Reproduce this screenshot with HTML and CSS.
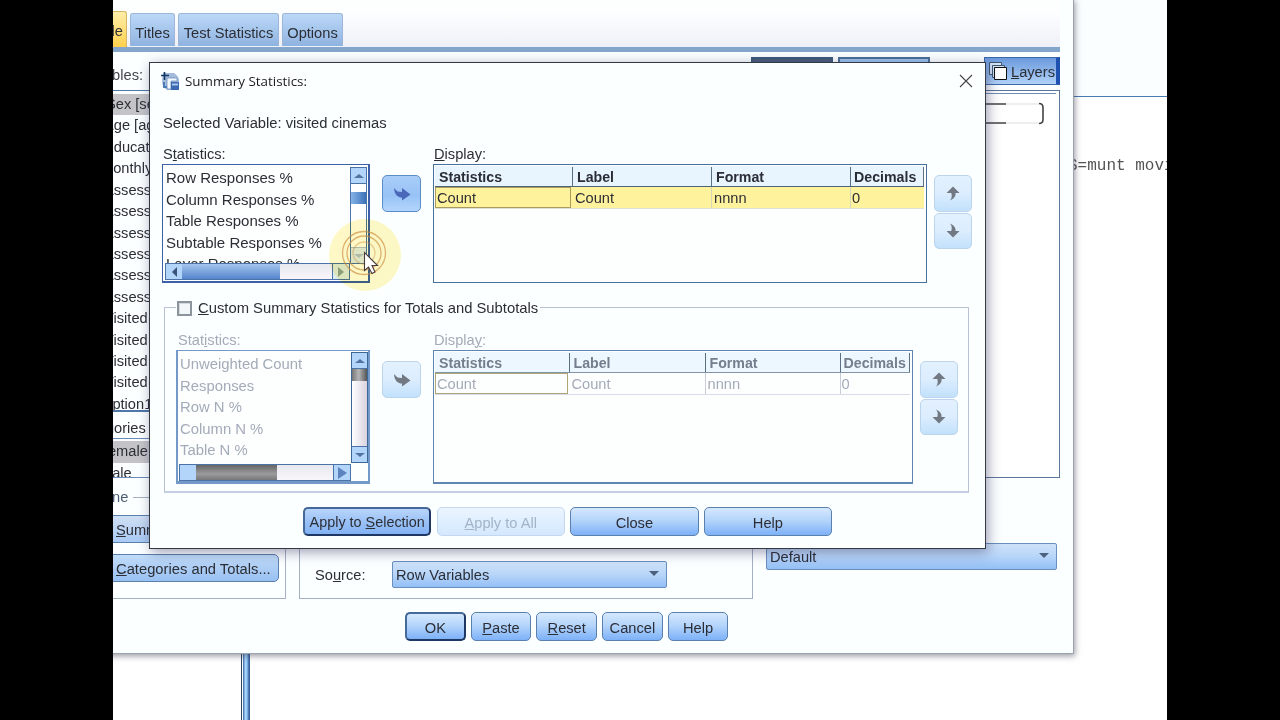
FILE: index.html
```html
<!DOCTYPE html>
<html lang="en">
<head>
<meta charset="utf-8">
<title>Summary Statistics</title>
<link rel="stylesheet" href="styles.css">
</head>
<body>
<svg class="defs" width="0" height="0">
  <symbol id="arrow" viewBox="0 0 18 14"><path d="M1 1 L4.500 4.500 L9 5 V1 L17.5 7.5 L9 13.500 V10.500 C5 10.500 1.5 8 1 1Z"/></symbol>
  <symbol id="up" viewBox="0 0 14 15"><path d="M7 0.5 L13.5 7 H9.5 C10 10 8 13 4 14.5 C6 12 6 10 5.3 7 H0.5Z"/></symbol>
  <symbol id="down" viewBox="0 0 14 15"><path d="M7 14.5 L13.5 8 H9.5 C10 5 8 2 4 0.5 C6 3 6 5 5.3 8 H0.5Z"/></symbol>
</svg>
<div class="screen">
  <div class="editor">
    <div class="editor-line">S=munt movie</div>
  </div>
  <div class="splitter"></div>

  <div class="window tables">
    <div class="tabs">
      <div class="tab active">Table</div>
      <div class="tab t1">Titles</div>
      <div class="tab t2">Test Statistics</div>
      <div class="tab t3">Options</div>
    </div>
    <div class="toolbar">
      <span class="vars-label">Variables:</span>
      <div class="tool dark"></div>
      <div class="tool light"></div>
      <div class="tool layers">
        <svg width="20" height="20" viewBox="0 0 20 20"><g fill="#d5e6f6" stroke="#3f566e"><path d="M1.5 1.5h12v12h-12z"/><path d="M4.500 4.500h12v12h-12z"/></g><path d="M6.500 6.500h12v12h-12z" fill="#fff" stroke="#111"/></svg>
        <span><u>L</u>ayers</span>
      </div>
    </div>
    <div class="panes">
      <div class="side">
        <div class="vars">
          <div class="sel">Sex [sex]</div><div>Age [age]</div><div>Education</div><div class="m">Monthly</div>
          <div>Assess</div><div>Assess</div><div>Assess</div><div>Assess</div><div>Assess</div><div>Assess</div>
          <div>Visited</div><div>Visited</div><div>Visited</div><div>Visited</div><div class="m">Option1</div>
        </div>
        <div class="cat-label">Categories</div>
        <div class="cats"><div class="sel">Female</div><div>Male</div></div>
      </div>
      <div class="canvas">
        <div class="canvas-top"></div>
        <svg class="slot" width="60" height="24" viewBox="0 0 60 24"><path d="M0 2H21M0 21H21" stroke="#444" stroke-width="1.6"/><path d="M21 2H54M21 21H54" stroke="#ddd"/><path d="M54 1.500q4 0 4 4v12q0 4-4 4" fill="none" stroke="#444" stroke-width="1.6"/></svg>
      </div>
    </div>
    <div class="lower">
      <div class="define">
        <div class="define-title"><span>Define</span></div>
        <div class="btn wide"><span><u>S</u>ummary</span></div>
        <div class="btn wide cat"><span><u>C</u>ategories and Totals...</span></div>
      </div>
      <div class="source">
        <span class="source-label">So<u>u</u>rce:</span>
        <div class="combo"><span>Row Variables</span><i class="caret"></i></div>
      </div>
      <div class="combo position"><span>Default</span><i class="caret"></i></div>
    </div>
    <div class="actions">
      <div class="btn primary">OK</div>
      <div class="btn"><span><u>P</u>aste</span></div>
      <div class="btn"><span><u>R</u>eset</span></div>
      <div class="btn">Cancel</div>
      <div class="btn">Help</div>
    </div>
  </div>

  <div class="window dialog">
    <div class="titlebar">
      <svg width="20" height="20" viewBox="0 0 20 20"><path d="M3 2h11q5 3 5 8v9H7q-5-3-5-9z" fill="#a3bcdc"/><path d="M7 7h10v3h-6v8H7z" fill="#f2f7fc" stroke="#6f90bb" stroke-width=".8"/><path d="M11 11h8v8h-8z" fill="#3b68ae"/><path d="M12 12.500h6v2h-6z" fill="#a7c6ee"/><path d="M4.500 1v8M1 4.500h8" stroke="#123766" stroke-width="1.600"/><path d="M4 11v5h3" stroke="#4d7cb8" fill="none" stroke-width="2"/></svg>
      <span>Summary Statistics:</span>
      <svg class="close" width="14" height="14" viewBox="0 0 14 14"><path d="M1 1L13 13M13 1L1 13" stroke="#444" stroke-width="1.1"/></svg>
    </div>
    <div class="selected">Selected Variable: visited cinemas</div>

    <div class="picker first">
      <div class="field list-field">
        <label>S<u>t</u>atistics:</label>
        <div class="list">
          <div class="rows"><div>Row Responses %</div><div>Column Responses %</div><div>Table Responses %</div><div>Subtable Responses %</div><div>Layer Responses %</div></div>
          <div class="vbar"><b class="sb"><i class="tri n"></i></b><i class="thumb"></i><b class="sb end"><i class="tri s"></i></b></div>
          <div class="hbar"><b class="sb"><i class="tri w"></i></b><i class="thumb"></i><i class="track"></i><b class="sb"><i class="tri e"></i></b></div>
        </div>
      </div>
      <div class="icon-btn move on"><svg width="18" height="14"><use href="#arrow"/></svg></div>
      <div class="field table-field">
        <label><u>D</u>isplay:</label>
        <div class="grid">
          <div class="tr head"><div>Statistics</div><div>Label</div><div>Format</div><div>Decimals</div></div>
          <div class="tr row"><div class="focus">Count</div><div>Count</div><div>nnnn</div><div>0</div></div>
        </div>
      </div>
      <div class="order">
        <div class="icon-btn"><svg width="14" height="15"><use href="#up"/></svg></div>
        <div class="icon-btn"><svg width="14" height="15"><use href="#down"/></svg></div>
      </div>
    </div>

    <div class="group">
      <div class="legend"><i class="check"></i><span><u>C</u>ustom Summary Statistics for Totals and Subtotals</span></div>
      <div class="picker second">
        <div class="field list-field">
          <label>Stat<u>i</u>stics:</label>
          <div class="list">
            <div class="rows"><div>Unweighted Count</div><div>Responses</div><div>Row N %</div><div>Column N %</div><div>Table N %</div></div>
            <div class="vbar"><b class="sb"><i class="tri n"></i></b><i class="thumb"></i><b class="sb end"><i class="tri s"></i></b></div>
            <div class="hbar"><b class="sb"></b><i class="thumb"></i><i class="track"></i><b class="sb"><i class="tri e"></i></b></div>
          </div>
        </div>
        <div class="icon-btn move"><svg width="18" height="14"><use href="#arrow"/></svg></div>
        <div class="field table-field">
          <label>Displa<u>y</u>:</label>
          <div class="grid">
            <div class="tr head"><div>Statistics</div><div>Label</div><div>Format</div><div>Decimals</div></div>
            <div class="tr row"><div class="focus">Count</div><div>Count</div><div>nnnn</div><div>0</div></div>
          </div>
        </div>
        <div class="order">
          <div class="icon-btn"><svg width="14" height="15"><use href="#up"/></svg></div>
          <div class="icon-btn"><svg width="14" height="15"><use href="#down"/></svg></div>
        </div>
      </div>
    </div>

    <div class="footer">
      <div class="btn primary"><span>Apply to <u>S</u>election</span></div>
      <div class="btn off"><span><u>A</u>pply to All</span></div>
      <div class="btn">Close</div>
      <div class="btn">Help</div>
    </div>
  </div>

  <div class="glow"></div>
  <svg class="pointer" width="50" height="50" viewBox="0 0 50 50">
    <g fill="none" stroke="#c98a3c" stroke-opacity=".65" stroke-width="1.3"><circle cx="25" cy="25" r="21.500"/><circle cx="25" cy="25" r="17"/><circle cx="25" cy="25" r="11" stroke-opacity=".4"/></g>
    <path d="M25.500 24.500V42.500L29.500 39L33 45.500L36 44L33 37.500H38.500Z" fill="#fff" stroke="#4a3b3b" stroke-width="1.1"/>
  </svg>
</div>
</body>
</html>
```
FILE: styles.css
```css
* { box-sizing: border-box; }
body {
  margin: 0; width: 1280px; height: 720px; overflow: hidden;
  display: flex; justify-content: center; background: #000;
  font: 14.650px/20px "Liberation Sans", Arial, sans-serif; color: #2c2e36;
}
u { text-underline-offset: 1px; text-decoration-thickness: 1px; }
.defs { position: absolute; }
.screen { position: relative; width: 1054px; height: 720px; overflow: hidden; background: #fff; white-space: nowrap; }

.editor { margin-left: 955px; padding-top: 96px; height: 400px; background: linear-gradient(#fbfeff 96px, #fff 96px); }
.editor-line { border-top: 1px solid #4a78b0; padding-top: 59px; font: 16px/20px "Liberation Mono", monospace; color: #555; height: 100px; }
.splitter {
  position: absolute; left: 128px; top: 640px; width: 9px; height: 80px;
  background: linear-gradient(90deg, #2c4468 0 1px, #fff 1px 2px, #4f7fb8 2px 3px, #b3dcfc 4px, #8fc4f5 6px, #3a64a0 8px);
}

.window { position: absolute; background: #fcffff; }
.tables {
  left: -14px; top: -1px; width: 975px; height: 655px;
  border: 1px solid #9aa2b0; box-shadow: 1px 2px 6px rgba(50,50,70,.5);
}
.tabs {
  display: flex; align-items: flex-end; gap: 3px; width: 960px; height: 52px;
  border-bottom: 5px solid #84a5cc; background: linear-gradient(#fdffff 10px, #f0f0f8 46px);
}
.tab {
  height: 33px; margin-bottom: 1px; padding-top: 9px; text-align: center;
  background: linear-gradient(#bcd8f8, #8fb3e0); border: 1px solid #9bb6d8; border-bottom: 0; border-radius: 3px 3px 0 0;
}
.active { width: 27px; height: 36px; margin-bottom: 0; background: linear-gradient(#ffedaa, #ffd04c); border-color: #d5b661; display: flex; justify-content: flex-end; padding-right: 3px; }
.t1 { width: 45px; }
.t2 { width: 101px; }
.t3 { width: 61px; }

.toolbar { display: flex; width: 960px; height: 38px; padding-top: 5px; align-items: flex-start; }
.vars-label { width: 651px; padding-top: 8px; text-indent: -21px; color: #43464c; }
.tool { height: 28px; border: 2px solid #3d5a7c; border-bottom-width: 1px; }
.dark { width: 82px; background: #4b5e7a; }
.light { width: 92px; margin-left: 5px; background: #9cc3ee; border-color: #4a6f96; }
.layers { width: 76px; margin-left: auto; display: flex; gap: 3px; padding: 3px 0 0 4px; background: linear-gradient(#6b99dc, #b0d2f8); border: solid #3d68a8; border-width: 1px 4px 1px 1px; border-right-color: #1f52b0; }
.layers span { padding-top: 1px; }
.layers svg { flex: none; margin: 0 0 0 -1px; }

.panes { display: flex; justify-content: space-between; width: 960px; height: 388px; }
.side { width: 50px; border-top: 1px solid #4f77a8; border-bottom: 1px solid #6a8db8; overflow: hidden; }
.vars { height: 321px; overflow: hidden; line-height: 21.430px; border-bottom: 2px solid #4f77a8; padding-top: 3px; }
.vars div { padding-left: 4px; height: 21.430px; }
.vars .sel { padding-left: 6px; }
.vars .m { padding-left: 1px; }
.sel { background: #c4c4c8; }
.cat-label { height: 27px; padding-top: 6px; text-indent: -25px; border-bottom: 1px solid #6a8db8; }
.cats { padding-top: 2px; line-height: 21.500px; }
.cats .sel { text-indent: -1px; }
.canvas { width: 200px; border: 1px solid #5c7699; border-left: 0; background: #fff; }
.canvas-top { height: 3px; margin-right: 3px; border-bottom: 1px solid #6f8fb5; }
.slot { display: block; margin: 8px 0 0 125px; }

.lower { display: flex; width: 960px; height: 121px; }
.define { width: 186px; border: solid #a5b0c0; border-width: 0 1px 1px 0; padding-top: 9px; }
.define-title { height: 20px; margin-bottom: 8px; display: flex; align-items: center; color: #4c5c74; }
.define-title span { margin-left: -14px; }
.define-title::after { content: ""; flex: 1; margin-left: 5px; border-top: 1px solid #a5b0c0; }
.btn {
  display: flex; align-items: center; justify-content: center; height: 29px; padding-top: 1px;
  background: linear-gradient(#d5e8fd, #b5d5fb 45%, #7db1f8); border: 1px solid #5a80ac; border-radius: 5px;
}
.wide { width: 179px; height: 28px; justify-content: flex-start; padding: 1px 0 0 15px; background: linear-gradient(#cfdff3, #a8caf4); }
.cat { margin-top: 11px; font-size: 14.750px; padding-top: 2px; background: linear-gradient(#c2dcf8, #98c0f2); }
.source { display: flex; width: 454px; margin-left: 13px; border: 1px solid #a5b0c0; border-top: 0; padding: 83px 0 0 15px; }
.source-label { width: 77px; padding-top: 4px; }
.combo {
  display: flex; align-items: center; justify-content: space-between; width: 275px; height: 27px; padding: 0 7px 0 3px;
  background: linear-gradient(#cfe2f8, #b7d5f9 50%, #93bff6); border: 1px solid #6a8fbd; border-radius: 2px;
}
.position { width: 291px; margin: 65px 0 0 13px; }
.caret { border: 5px solid transparent; border-top: 5px solid #4c617e; border-bottom: 0; margin-top: -3px; }
.actions { display: flex; gap: 5px; padding: 13px 0 0 305px; }
.actions .btn { width: 60.700px; padding-top: 2px; }
.primary { border: 2px solid #1f3763; border-top-color: #456a9a; border-left-color: #456a9a; }

.dialog {
  left: 36px; top: 62px; width: 837px; height: 487px; border: 1px solid #333a44;
  box-shadow: 2px 3px 12px rgba(40,40,90,.45);
}
.titlebar { display: flex; align-items: center; height: 36px; padding-left: 10px; gap: 5px; font: 13.400px/20px "Open Sans", "Noto Sans", sans-serif; color: #1c1c1f; }
.titlebar svg { flex: none; }
.close { margin: 0 12px 0 auto; }
.selected { margin: 14px 0 0 13px; font-size: 14.750px; }

.picker { display: flex; align-items: flex-start; }
.first { margin: 11px 0 0 12px; }
.field label { display: block; height: 20px; }
.table-field label { padding-left: 1px; }
.list, .grid { border: 1px solid #4d78a8; background: #fdffff; }
.first .list-field label { padding-left: 1px; }
.first .list { width: 208px; height: 119px; border-width: 1px 2px 2px 1px; border-color: #3c60aa; }
.second .list { width: 194px; height: 134px; border: 2px solid #7299c8; border-width: 1px 2px 3px 2px; }
.list { position: relative; overflow: hidden; font-size: 15px; padding: 2px 0 0 2px; line-height: 21.500px; }
.rows { width: 186px; height: 98px; overflow: hidden; }
.second .rows { width: 172px; height: 110px; padding-top: 1px; }
.first .rows div { padding-left: 1px; }
.vbar { position: absolute; right: 1px; top: 2px; width: 17px; height: 97px; display: flex; flex-direction: column; border: 1px solid #4c73a8; background: #fff; }
.hbar { position: absolute; left: 2px; bottom: 1px; width: 185px; height: 17px; display: flex; border: 1px solid #4c73a8; background: #fff; }
.sb { display: flex; flex: none; align-items: center; justify-content: center; width: 16px; height: 16px; background: #b3d5fa; }
.vbar .sb { width: 15px; border-bottom: 1px solid #4c73a8; }
.hbar .sb { height: 15px; }
.vbar .end { margin-top: auto; border-bottom: 0; border-top: 1px solid #4c73a8; }
.tri { border: 4px solid transparent; }
.n { border-width: 0 5px 4px; border-bottom-color: #5274a0; }
.s { border-width: 4px 5px 0; border-top-color: #5274a0; }
.w { border-width: 5px 5px 5px 0; border-right-color: #3a5577; }
.e { border-width: 6px 0 6px 9px; border-left-color: #5c83bd; }
.first .e { border-width: 5px 0 5px 6px; border-left-color: #8ba39a; }
.first .hbar .sb:last-child { background: #dcebf2; }
.first .vbar .end { opacity: .45; }
.first .vbar .thumb { height: 12px; margin-top: 8px; background: linear-gradient(90deg, #86b2e8, #3e72b8); }
.first .hbar .thumb { width: 98px; background: linear-gradient(#a4c6ee, #5585cc); }
.track { flex: 1; background: linear-gradient(#e8e8f0, #f8f6fa); border-right: 1px solid #4c73a8; }
.second .vbar { height: 111px; top: 1px; right: 0; background: linear-gradient(90deg, #fff, #d9d3df); border-color: #3f6796; }
.second .vbar .thumb { height: 12px; background: linear-gradient(90deg, #777, #b5b5b8 45%, #555); }
.second .hbar { left: 1px; bottom: 0; width: 172px; }
.second .hbar .thumb { width: 81px; background: linear-gradient(#666, #9b9b9e 60%, #77777a); }

.icon-btn {
  display: flex; align-items: center; justify-content: center; width: 39px; height: 36px;
  border: 1px solid #bcd4ec; border-radius: 5px; background: linear-gradient(#e3f1fe, #dcedfe 50%, #c2e1fc); fill: #727983;
}
.on { background: linear-gradient(#a9cdf8, #98c2f6 55%, #b2d5fc); border: 1.500px solid #5a8cc8; fill: #4a68ba; }
.move { margin: 31px 12px 0; height: 37px; }
.order { display: flex; flex-direction: column; gap: 1px; margin: 31px 0 0 7px; }
.order .icon-btn { width: 38px; height: 36.500px; }

.grid { width: 494px; height: 119px; padding: 1px; }
.first .grid { border-color: #47719c; }
.tr { display: grid; grid-template-columns: 138px 139px 139px 1fr; margin-right: 1px; }
.head { height: 21px; padding-top: 1px; background: #e8f5ff; border-bottom: 1px solid #4d6478; font-weight: bold; font-size: 14.200px; line-height: 21px; }
.head div { height: 19px; padding-left: 4px; border-right: 1px solid #5a7184; }
.head div:last-child { padding-left: 3px; }
.row { height: 22px; line-height: 23px; background: #fff29c; border-bottom: 1px solid #dedfd5; }
.row div { height: 21px; padding-left: 2px; border-right: 1px solid #d7d6b8; }
.row div:last-child { border-right: 0; padding-left: 1px; }
.row .focus { border: 1px solid #a99a5d; margin-right: 2px; line-height: 21px; padding-left: 1px; }

.group { width: 805px; height: 186px; margin: 24px 0 0 14px; border: 1px solid #b9c3d3; padding: 0 0 0 11px; border-width: 1px 1px 2px; border-bottom-color: #c5d0e2; }
.legend { display: flex; align-items: center; height: 20px; width: 364px; margin-top: -10px; background: #fcffff; gap: 6px; font-size: 14.800px; }
.check { flex: none; width: 15px; height: 15px; margin-left: 1px; border: 2px solid #8c959e; background: #f4f7fa; box-shadow: inset 1px 1px 0 #d5dade; }
.second { margin-top: 12px; color: #a4abb8; }
.second .list { color: #a4abb8; font-size: 14.850px; }
.second .list-field label { padding-left: 2px; }
.second .grid { width: 480px; height: 134px; border: 1px solid #5f86b2; border-bottom-width: 2px; }
.second .tr { grid-template-columns: 134.500px 136px 135px 1fr; }
.second .head { color: #747e8c; background: #edf7ff; border-color: #8294a6; }
.second .row { background: #fdffff; border-color: #d8dbe8; }
.second .row div { border-color: #c8ccda; }
.second .row .focus { border-color: #b0a577; }

.footer { display: flex; gap: 5.200px; margin: 14px 0 0 153px; }
.footer .btn { width: 128.400px; padding-top: 2px; }
.footer .primary { padding-top: 1px; font-size: 14.400px; background: linear-gradient(#b9d5fa, #9bc2f6 50%, #82b2f4); }
.footer .off { color: #a3b3c8; border-color: #c3d7ee; background: linear-gradient(#ecf5ff, #d3e8fe); }

.glow { position: absolute; left: 216px; top: 219px; width: 72px; height: 72px; border-radius: 50%; background: rgba(255,243,160,.6); mix-blend-mode: multiply; }
.pointer { position: absolute; left: 226px; top: 228px; }
```
